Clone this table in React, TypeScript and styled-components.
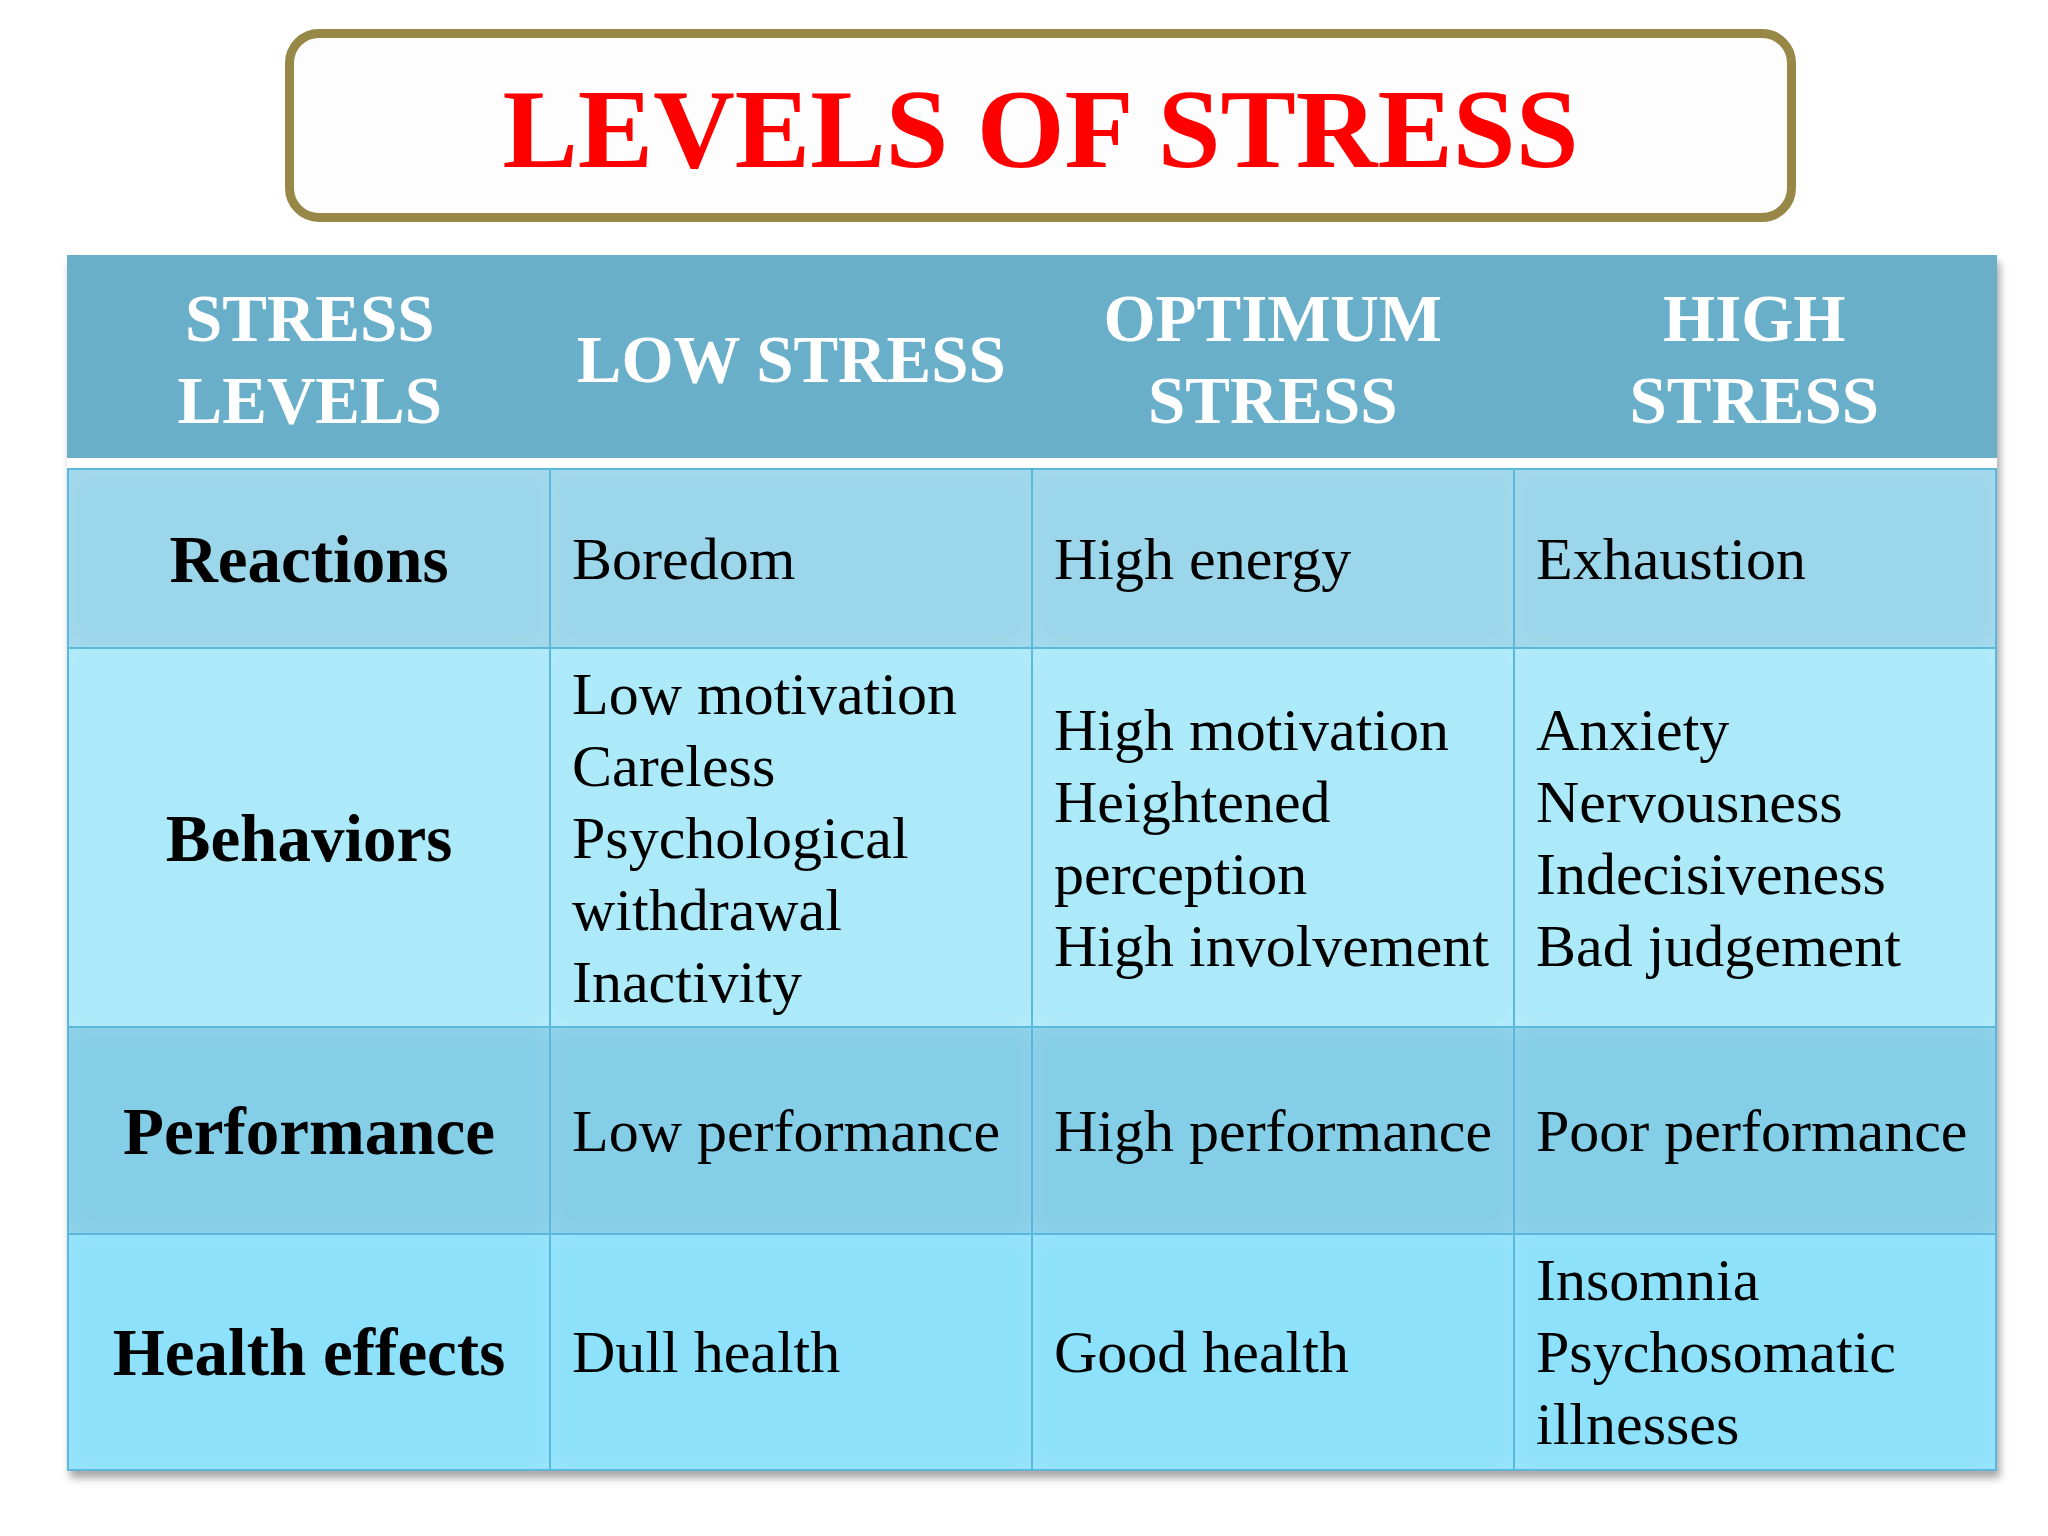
import React from "react";
import styled, { createGlobalStyle } from "styled-components";

const GlobalStyle = createGlobalStyle`
  html, body {
    margin: 0;
    padding: 0;
    background: #ffffff;
  }
  body {
    font-family: "Liberation Serif", "Times New Roman", serif;
  }
`;

const Page = styled.div`
  width: 2048px;
  height: 1536px;
  box-sizing: border-box;
  padding-top: 29px;
  display: flex;
  flex-direction: column;
  background: #ffffff;
`;

const TitleBox = styled.div`
  box-sizing: border-box;
  margin-left: 285px;
  width: 1511px;
  height: 193px;
  border: 9px solid #978848;
  border-radius: 34px;
  background: #fdfdfd;
  display: flex;
  align-items: center;
  justify-content: center;
  padding-top: 8px;
`;

const Title = styled.h1`
  margin: 0;
  font-family: "Liberation Serif", "Times New Roman", serif;
  font-weight: 700;
  font-size: 113px;
  line-height: 1.1;
  color: #ff0000;
  white-space: nowrap;
`;

const Table = styled.div`
  margin-top: 33px;
  margin-left: 67px;
  width: 1930px;
  display: flex;
  flex-direction: column;
  box-shadow: 3px 7px 8px rgba(0, 0, 0, 0.35);
`;

const HeaderRow = styled.div`
  display: grid;
  grid-template-columns: repeat(4, 1fr);
  height: 203px;
  padding: 0 2px;
  background: #6aafc9;
  border-bottom: 10px solid #ffffff;
`;

const HeaderCell = styled.div`
  display: flex;
  flex-direction: column;
  align-items: center;
  justify-content: center;
  padding-top: 4px;
  color: #ffffff;
  font-family: "Liberation Serif", "Times New Roman", serif;
  font-weight: 700;
  font-size: 67px;
  line-height: 82px;
  text-align: center;
  white-space: nowrap;
`;

const Body = styled.div`
  display: grid;
  grid-template-columns: repeat(4, 1fr);
  grid-template-rows: 177px 377px 205px 234px;
  gap: 2px;
  padding: 2px;
  background: #5ab8dc;
`;

const rowColors: Record<number, string> = {
  0: "#9cd6ea",
  1: "#ace9f9",
  2: "#85cee7",
  3: "#8ee1fb",
};

const Cell = styled.div<{ $row: number; $label?: boolean }>`
  background: ${(p) => rowColors[p.$row]};
  box-shadow: inset 0 0 24px rgba(255, 255, 255, 0.12);
  display: flex;
  flex-direction: column;
  justify-content: center;
  align-items: ${(p) => (p.$label ? "center" : "flex-start")};
  padding-left: ${(p) => (p.$label ? "0" : "21px")};
  color: #000000;
  font-family: "Liberation Serif", "Times New Roman", serif;
  font-weight: ${(p) => (p.$label ? 700 : 400)};
  font-size: ${(p) => (p.$label ? "67px" : "60px")};
  line-height: 72px;
  white-space: nowrap;
`;

const Line = styled.span`
  display: block;
`;

const headers: string[][] = [
  ["STRESS", "LEVELS"],
  ["LOW STRESS"],
  ["OPTIMUM", "STRESS"],
  ["HIGH", "STRESS"],
];

const rows: { label: string; cells: string[][] }[] = [
  {
    label: "Reactions",
    cells: [["Boredom"], ["High energy"], ["Exhaustion"]],
  },
  {
    label: "Behaviors",
    cells: [
      ["Low motivation", "Careless", "Psychological", "withdrawal", "Inactivity"],
      ["High motivation", "Heightened", "perception", "High involvement"],
      ["Anxiety", "Nervousness", "Indecisiveness", "Bad judgement"],
    ],
  },
  {
    label: "Performance",
    cells: [["Low performance"], ["High performance"], ["Poor performance"]],
  },
  {
    label: "Health effects",
    cells: [
      ["Dull health"],
      ["Good health"],
      ["Insomnia", "Psychosomatic", "illnesses"],
    ],
  },
];

export default function App() {
  return (
    <>
      <GlobalStyle />
      <Page>
        <TitleBox>
          <Title>LEVELS OF STRESS</Title>
        </TitleBox>
        <Table>
          <HeaderRow>
            {headers.map((h, i) => (
              <HeaderCell key={i}>
                {h.map((l, j) => (
                  <Line key={j}>{l}</Line>
                ))}
              </HeaderCell>
            ))}
          </HeaderRow>
          <Body>
            {rows.map((r, ri) => (
              <React.Fragment key={ri}>
                <Cell $row={ri} $label>
                  {r.label}
                </Cell>
                {r.cells.map((c, ci) => (
                  <Cell $row={ri} key={ci}>
                    {c.map((l, li) => (
                      <Line key={li}>{l}</Line>
                    ))}
                  </Cell>
                ))}
              </React.Fragment>
            ))}
          </Body>
        </Table>
      </Page>
    </>
  );
}
